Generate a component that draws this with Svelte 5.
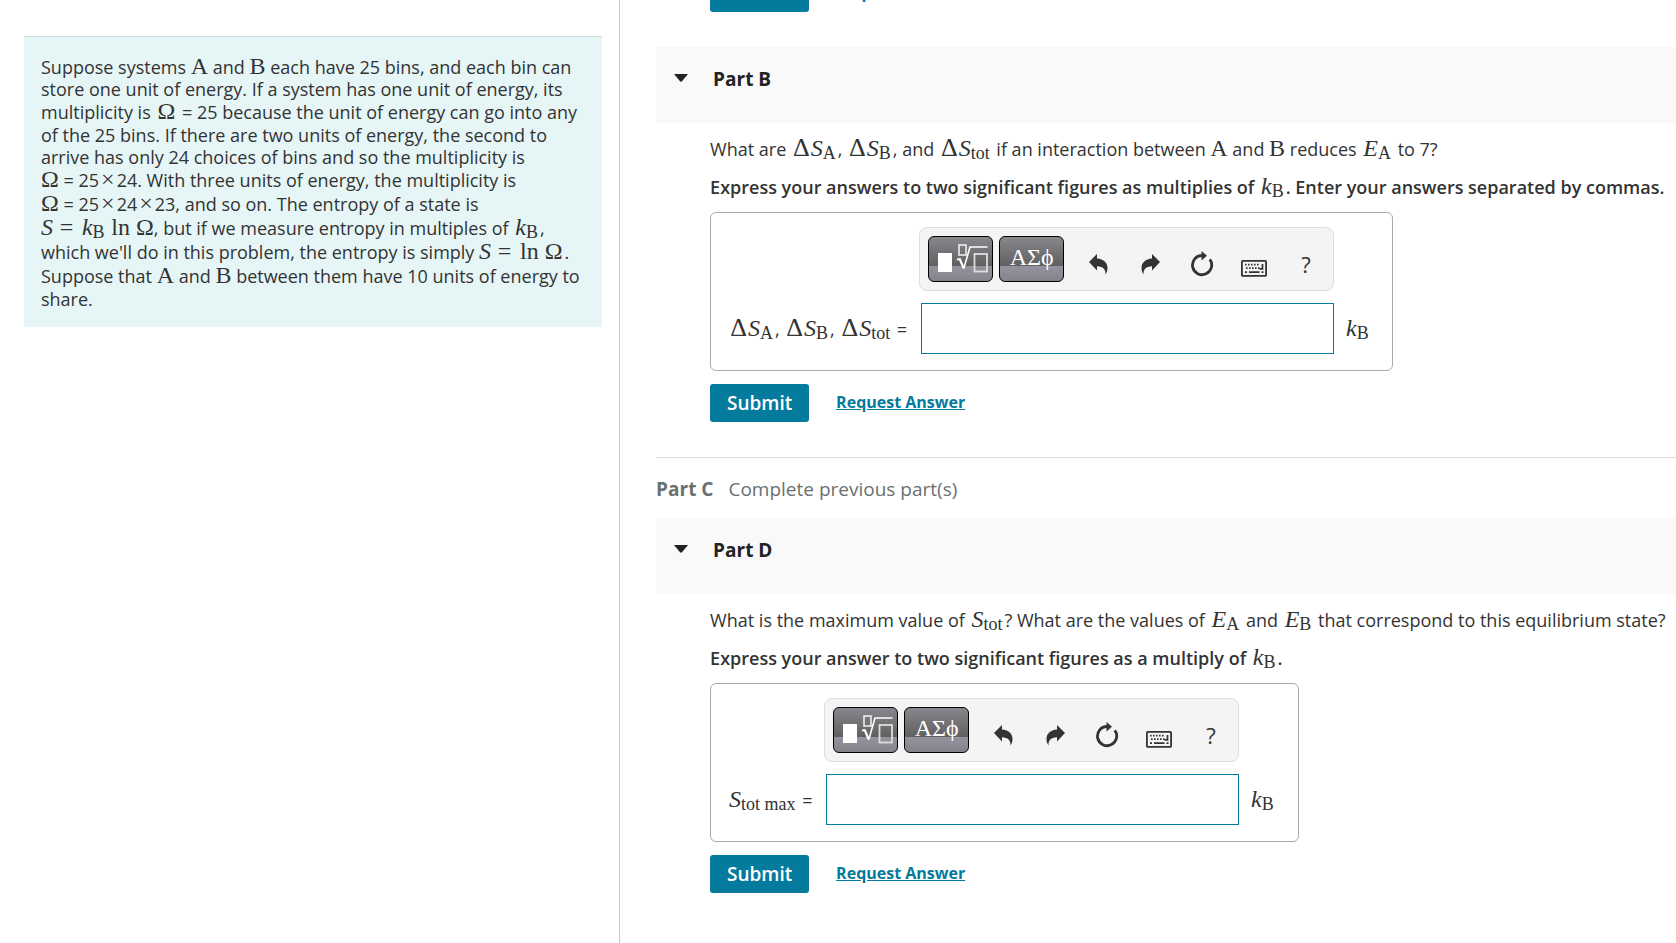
<script lang="ts">
  interface Part {
    id: string;
    title: string;
    answer: string;
  }

  let partB = $state<Part>({ id: "part-b", title: "Part B", answer: "" });
  let partD = $state<Part>({ id: "part-d", title: "Part D", answer: "" });
</script>

{#snippet rm(text: string)}<span class="math">{text}</span>{/snippet}

{#snippet op(text: string)}<span class="math spaced">{text}</span>{/snippet}

{#snippet sym(base: string, sub: string)}<span class="math spaced"><i>{base}</i><sub>{sub}</sub></span>{/snippet}

{#snippet delta(base: string, sub: string)}<span class="math spaced"><span class="delta">Δ</span><i>{base}</i><sub>{sub}</sub></span>{/snippet}

{#snippet header(title: string)}
  <header class="part-header">
    <button class="toggle" aria-label="Collapse {title}">
      <svg width="14" height="8" viewBox="0 0 14 8"><path d="M0 0h14L8 7.3q-1 .9-2 0z" fill="#222" /></svg>
    </button>
    <h2>{title}</h2>
  </header>
{/snippet}

{#snippet toolbar()}
  <div class="toolbar">
    <button class="tool" aria-label="Templates">
      <svg width="64" height="44" viewBox="1 1 64 44" fill="none">
        <rect x="10" y="17" width="14" height="19" fill="#fff" />
        <rect x="31" y="9" width="7" height="10" stroke="#eee" stroke-width="1.6" />
        <path d="M29 24l2.5-1.5" stroke="#fff" stroke-width="1.5" />
        <path d="M31.5 22.5l4.3 10" stroke="#fff" stroke-width="2.2" />
        <path d="M35.8 32.5L42 11h17.5" stroke="#fff" stroke-width="1.6" />
        <rect x="46.5" y="18" width="12.5" height="17.5" stroke="#ddd" stroke-width="1.8" />
      </svg>
    </button>
    <button class="tool greek" aria-label="Symbols">ΑΣϕ</button>
    <div class="icons">
      <button class="icon" aria-label="Undo">
        <svg width="19" height="21" viewBox="0 0 19 21"><path d="M0 8L8 0v4.5c6.5.5 10.5 4.1 10.5 9.5 0 2.4-.7 4.6-2 6.5.4-5-2.5-8-8.5-8.2v4.2z" fill="#333" /></svg>
      </button>
      <button class="icon" aria-label="Redo">
        <svg width="19" height="21" viewBox="0 0 19 21"><path d="M19 8L11 0v4.5C4.5 5 .5 8.6.5 14c0 2.4.7 4.6 2 6.5-.4-5 2.5-8 8.5-8.2v4.2z" fill="#333" /></svg>
      </button>
      <button class="icon" aria-label="Reset">
        <svg width="24" height="26" viewBox="0 0 24 26">
          <path d="M12 4.5a9.6 9.6 0 1 0 7.8 3.9" fill="none" stroke="#333" stroke-width="2.8" />
          <path d="M11.5 0l5.5 4.800-5.500 4.700z" fill="#333" />
        </svg>
      </button>
      <button class="icon low" aria-label="Keyboard shortcuts">
        <svg width="26" height="17" viewBox="0 0 26 17" fill="none" stroke="#333">
          <rect x=".9" y=".9" width="24.2" height="15" rx="1" stroke-width="1.8" />
          <path d="M4 4.7h15M5 8.2h14" stroke-width="1.7" stroke-dasharray="1.6 1.4" />
          <path d="M21.5 4v4.8h-3M4 12.2h2M8 12.2h10.5M20.5 12.2h2" stroke-width="1.7" />
        </svg>
      </button>
      <button class="icon" aria-label="Help">?</button>
    </div>
  </div>
{/snippet}

{#snippet actions()}
  <div class="actions">
    <button class="submit">Submit</button>
    <a href="#request">Request Answer</a>
  </div>
{/snippet}

<div class="page">
  <aside>
    <div class="intro">
      <span class="line">Suppose systems {@render rm("A")} and {@render rm("B")} each have 25 bins, and each bin can</span>
      <span class="line">store one unit of energy. If a system has one unit of energy, its</span>
      <span class="line tall">multiplicity is {@render op("Ω")} = 25 because the unit of energy can go into any</span>
      <span class="line">of the 25 bins. If there are two units of energy, the second to</span>
      <span class="line">arrive has only 24 choices of bins and so the multiplicity is</span>
      <span class="line tall">{@render rm("Ω")} = 25{@render op("×")}24. With three units of energy, the multiplicity is</span>
      <span class="line tall">{@render rm("Ω")} = 25{@render op("×")}24{@render op("×")}23, and so on. The entropy of a state is</span>
      <span class="line tall"><i class="math">S</i> {@render op("=")} {@render sym("k", "B")} {@render rm("ln Ω")}, but if we measure entropy in multiples of {@render sym("k", "B")},</span>
      <span class="line tall">which we'll do in this problem, the entropy is simply <i class="math">S</i> {@render op("=")} {@render op("ln Ω")}.</span>
      <span class="line tall">Suppose that {@render rm("A")} and {@render rm("B")} between them have 10 units of energy to</span>
      <span class="line">share.</span>
    </div>
  </aside>

  <main>
    <section class="previous">
      {@render actions()}
    </section>

    <section class="part">
      {@render header(partB.title)}
      <div class="body">
        <p>What are {@render delta("S", "A")}, {@render delta("S", "B")}, and {@render delta("S", "tot")} if an interaction between {@render rm("A")} and {@render rm("B")} reduces {@render sym("E", "A")} to 7?</p>
        <p class="instruction">Express your answers to two significant figures as multiplies of {@render sym("k", "B")}. Enter your answers separated by commas.</p>
        <div class="panel wide">
          {@render toolbar()}
          <label for={partB.id}>{@render delta("S", "A")}, {@render delta("S", "B")}, {@render delta("S", "tot")} =</label>
          <input id={partB.id} type="text" bind:value={partB.answer} />
          <span class="unit">{@render sym("k", "B")}</span>
        </div>
        {@render actions()}
      </div>
    </section>

    <section class="locked">
      <h2>Part C</h2>
      <span>Complete previous part(s)</span>
    </section>

    <section class="part">
      {@render header(partD.title)}
      <div class="body">
        <p>What is the maximum value of {@render sym("S", "tot")}? What are the values of {@render sym("E", "A")} and {@render sym("E", "B")} that correspond to this equilibrium state?</p>
        <p class="instruction">Express your answer to two significant figures as a multiply of {@render sym("k", "B")}.</p>
        <div class="panel">
          {@render toolbar()}
          <label for={partD.id}>{@render sym("S", "tot max")} =</label>
          <input id={partD.id} type="text" bind:value={partD.answer} />
          <span class="unit">{@render sym("k", "B")}</span>
        </div>
        {@render actions()}
      </div>
    </section>
  </main>
</div>

<style>
  :global(body) {
    margin: 0;
    background: #fff;
  }

  .page {
    display: flex;
    min-height: 100vh;
    font-family: "Open Sans", "Noto Sans", sans-serif;
    font-size: 18px;
    color: #333;
    overflow: hidden;
  }

  aside {
    box-sizing: border-box;
    width: 37%;
    flex: none;
    padding: 36px 17px 0 24px;
    border-right: 1px solid #b9c9dc;
  }

  .intro {
    padding: 19px 16px 17px 17px;
    border-top: 1px solid #d5dadb;
    background: #e6f6f7;
    white-space: nowrap;
  }

  .line {
    display: block;
    line-height: 22px;
  }

  .line.tall { line-height: 24px; }

  .math {
    font-family: "Liberation Serif", serif;
    font-size: 24px;
    font-weight: 400;
    line-height: 0;
  }

  .spaced { padding: 0 2px; }

  .delta {
    padding-right: 1px;
    font-size: 26px;
  }

  sub {
    font-size: 18px;
    line-height: 0;
    vertical-align: -3px;
  }

  main {
    flex: 1;
    min-width: 0;
    padding-left: 36px;
  }

  .previous {
    display: flex;
    align-items: flex-end;
    height: 12px;
    margin-bottom: 35px;
    padding-left: 54px;
    overflow: hidden;
  }

  .part-header {
    display: flex;
    align-items: flex-start;
    height: 76px;
    background: #f9f9f9;
  }

  .toggle {
    display: flex;
    width: 57px;
    padding: 27px 0 0 18px;
    border: none;
    background: none;
    cursor: pointer;
  }

  h2 {
    margin: 0;
    font-size: 19px;
    font-weight: 700;
    line-height: 26px;
  }

  .part-header h2 {
    padding-top: 19px;
    color: #222;
  }

  .body { padding-left: 54px; }

  p {
    margin: 0;
    padding-top: 14px;
    line-height: 24px;
    white-space: nowrap;
  }

  .instruction { font-weight: 600; }

  .panel {
    display: grid;
    grid-template-columns: 97px 415px 59px;
    row-gap: 12px;
    width: max-content;
    margin-top: 13px;
    padding: 14px 0 16px 16px;
    border: 1px solid #aaa;
    border-radius: 6px;
  }

  .panel.wide { grid-template-columns: 192px 415px 58px; }

  .toolbar {
    grid-column: 2 / 4;
    box-sizing: border-box;
    display: flex;
    gap: 6px;
    width: 415px;
    height: 64px;
    padding: 8px;
    border: 1px solid #ddd;
    border-radius: 8px;
    background: #f4f4f4;
  }

  .tool {
    flex: none;
    width: 65px;
    height: 46px;
    padding: 0;
    border: 1px solid #000;
    border-radius: 6px;
    background: linear-gradient(#88878d, #5f5f60 67%, #94929d 67%, #85838a);
    color: #fff;
    overflow: hidden;
    cursor: pointer;
  }

  .greek {
    padding-bottom: 4px;
    font-family: "Liberation Serif", serif;
    font-size: 24px;
  }

  .icons {
    display: flex;
    padding-left: 2px;
  }

  .icon {
    display: flex;
    align-items: center;
    justify-content: center;
    width: 52px;
    padding: 10px 0 0;
    border: none;
    background: none;
    color: #333;
    font-family: inherit;
    font-size: 22px;
    cursor: pointer;
  }

  .icon.low { padding-top: 18px; }

  label,
  .unit {
    align-self: center;
    line-height: 24px;
    white-space: nowrap;
  }

  label {
    padding-right: 12px;
    text-align: right;
  }

  .unit { padding-left: 10px; }

  input {
    box-sizing: border-box;
    height: 51px;
    margin-left: 2px;
    padding: 0 10px;
    border: 1px solid #047a9c;
    border-radius: 0;
    outline: none;
    font: inherit;
  }

  .actions {
    display: flex;
    align-items: center;
    gap: 27px;
    padding-top: 13px;
  }

  .submit {
    width: 99px;
    height: 38px;
    padding: 0;
    border: none;
    border-radius: 3px;
    background: #047a9c;
    color: #fff;
    font-family: inherit;
    font-size: 19px;
    font-weight: 600;
    cursor: pointer;
  }

  a {
    padding-bottom: 3px;
    color: #047a9c;
    font-size: 16px;
    font-weight: 700;
    line-height: 24px;
  }

  .locked {
    display: flex;
    align-items: center;
    gap: 15px;
    box-sizing: border-box;
    height: 61px;
    margin-top: 35px;
    padding-top: 2px;
    border-top: 1px solid #ddd;
    color: #6a7070;
    font-size: 19px;
  }
</style>
